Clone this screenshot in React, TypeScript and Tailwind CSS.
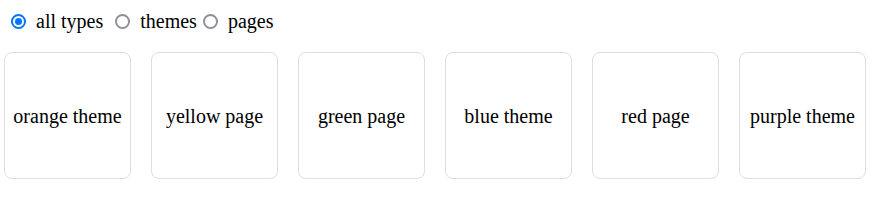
import React, { useState } from 'react';

const ITEMS = [
  { name: 'orange theme', type: 'theme' },
  { name: 'yellow page', type: 'page' },
  { name: 'green page', type: 'page' },
  { name: 'blue theme', type: 'theme' },
  { name: 'red page', type: 'page' },
  { name: 'purple theme', type: 'theme' },
];

const FILTERS = [
  { id: 'all', label: 'all types', ml: 'ml-[11px]' },
  { id: 'theme', label: 'themes', ml: 'ml-[12px]' },
  { id: 'page', label: 'pages', ml: 'ml-[6px]' },
];

export default function App() {
  const [filter, setFilter] = useState('all');
  const shown = ITEMS.filter(i => filter === 'all' || i.type === filter);

  return (
    <div className="w-[879px] h-[215px] bg-white text-black font-['Liberation_Serif',serif]">
      <div className="h-[42px] flex items-center text-[20px]">
        {FILTERS.map(f => {
          const on = filter === f.id;
          return (
            <label key={f.id} className={`flex items-center cursor-pointer ${f.ml}`}>
              <input
                type="radio"
                name="type"
                checked={on}
                onChange={() => setFilter(f.id)}
                className="sr-only"
              />
              <span
                className={
                  on
                    ? 'flex items-center justify-center shrink-0 w-[15px] h-[15px] mr-[10px] rounded-full border-[2px] border-[#0075ff]'
                    : 'flex items-center justify-center shrink-0 w-[15px] h-[15px] mr-[10px] rounded-full border-[2px] border-[#8f8f9d]'
                }
              >
                {on && <span className="w-[7px] h-[7px] rounded-full bg-[#0075ff]" />}
              </span>
              <span>{f.label}</span>
            </label>
          );
        })}
      </div>
      <div className="flex gap-[20px] pl-[4px] mt-[10px]">
        {shown.map(item => (
          <div
            key={item.name}
            className="w-[127px] h-[127px] border border-[#dedede] rounded-[8px] flex items-center justify-center text-[20px] whitespace-nowrap"
          >
            {item.name}
          </div>
        ))}
      </div>
    </div>
  );
}
